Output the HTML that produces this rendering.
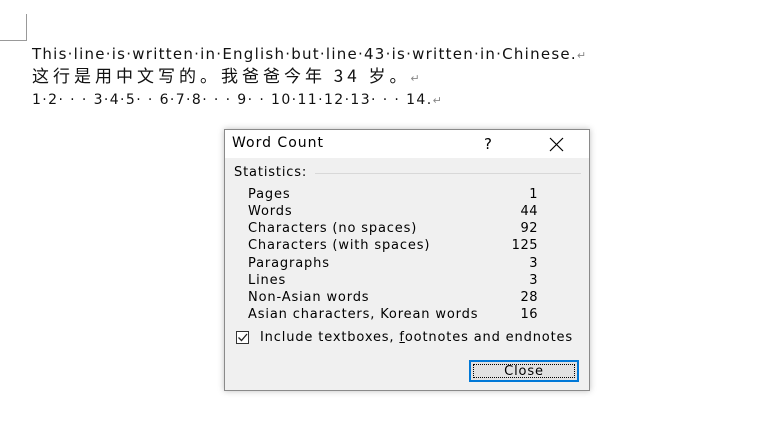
<!DOCTYPE html>
<html><head><meta charset="utf-8"><style>
body{margin:0;width:768px;height:432px;background:#fff;position:relative;overflow:hidden;font-family:"DejaVu Sans","Noto Sans CJK SC",sans-serif;}
.a{position:absolute;white-space:nowrap;}
.dlg{position:absolute;left:224px;top:129px;width:366px;height:262px;background:#f0f0f0;border:1px solid #8a8a8a;box-sizing:border-box;box-shadow:0 0 6px rgba(0,0,0,.25);font-size:13px;letter-spacing:0.85px;color:#000;}
.tb{position:absolute;left:0;top:0;width:100%;height:28px;background:#fff;}
.r{position:absolute;left:23px;width:290px;}
.r span{position:absolute;right:0;letter-spacing:0.5px}
</style></head><body>
<div class="a" style="left:26px;top:14px;width:1px;height:26px;background:#999"></div>
<div class="a" style="left:0;top:40px;width:27px;height:1px;background:#999"></div>
<div class="a" style="left:32px;top:45px;font-size:15px;letter-spacing:1.25px;color:#111">This·line·is·written·in·English·but·line·43·is·written·in·Chinese.<span style="color:#888;font-size:11px">↵</span></div>
<div class="a" style="left:32px;top:62px;font-size:17px;letter-spacing:4px;font-family:'Noto Sans CJK SC',sans-serif;color:#111">这行是用中文写的。我爸爸今年 34 岁。<span style="color:#888;font-size:11px">↵</span></div>
<div class="a" style="left:32px;top:92px;font-size:14px;letter-spacing:1.4px;color:#111">1·2· · · 3·4·5· · 6·7·8· · · 9· · 10·11·12·13· · · 14.<span style="color:#888;font-size:11px">↵</span></div>
<div class="dlg">
<div class="tb"></div>
<div class="a" style="left:7px;top:5px;font-size:14px;letter-spacing:1px">Word Count</div>
<div class="a" style="left:259px;top:5px;font-size:15px">?</div>
<svg class="a" style="left:324px;top:7px" width="15" height="15"><path d="M1 1L14 14M14 1L1 14" stroke="#000" stroke-width="1.2"/></svg>
<div class="a" style="left:9px;top:35px">Statistics:</div>
<div class="a" style="left:90px;top:43px;width:266px;height:1px;background:#d8d8d8"></div>
<div class="r" style="top:57px">Pages<span>1</span></div>
<div class="r" style="top:74px">Words<span>44</span></div>
<div class="r" style="top:91px">Characters (no spaces)<span>92</span></div>
<div class="r" style="top:108px">Characters (with spaces)<span>125</span></div>
<div class="r" style="top:126px">Paragraphs<span>3</span></div>
<div class="r" style="top:143px">Lines<span>3</span></div>
<div class="r" style="top:160px">Non-Asian words<span>28</span></div>
<div class="r" style="top:177px">Asian characters, Korean words<span>16</span></div>
<div class="a" style="left:11px;top:201px;width:13px;height:13px;border:1px solid #333;background:#fff;box-sizing:border-box"></div>
<svg class="a" style="left:12px;top:202px" width="11" height="11"><path d="M1.5 5.5L4.5 8.5L10 2" stroke="#222" stroke-width="1.3" fill="none"/></svg>
<div class="a" style="left:35px;top:200px">Include textboxes, <u>f</u>ootnotes and endnotes</div>
<div class="a" style="left:244px;top:230px;width:110px;height:22px;border:2px solid #0078d7;background:#e1e1e1;box-sizing:border-box"><div style="position:absolute;left:2px;top:2px;right:2px;bottom:2px;border:1px dotted #000;text-align:center;line-height:14px">Close</div></div>
</div>
</body></html>
